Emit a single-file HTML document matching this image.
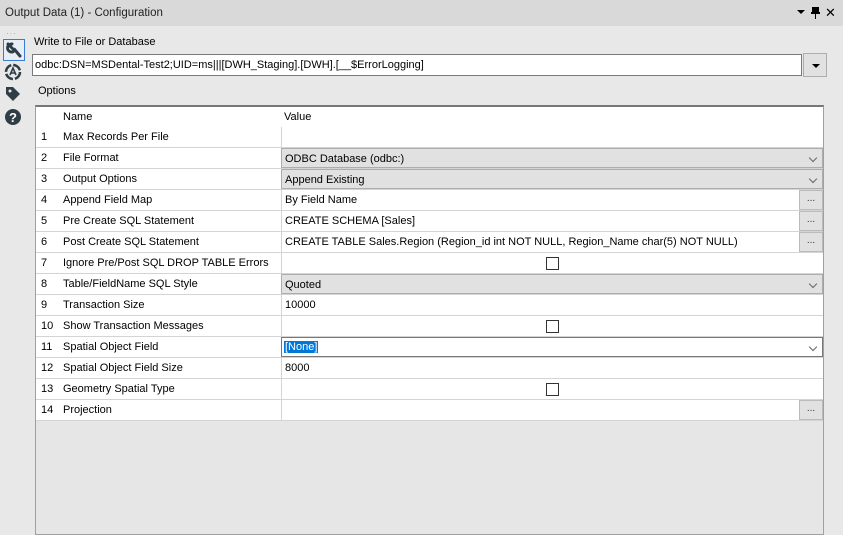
<!DOCTYPE html>
<html><head><meta charset="utf-8"><style>
*{margin:0;padding:0;box-sizing:border-box}
body{width:843px;height:527px;background:#e8e8e8;font-family:"Liberation Sans",sans-serif;font-size:11px;color:#000;position:relative;overflow:hidden}
.a{position:absolute}
.title{left:0;top:0;width:843px;height:26px;background:#d9d9d9;font-size:11.5px;line-height:26px;padding-left:5px;color:#222}
.grid{left:35px;top:105px;width:789px;height:430px;border:1px solid #a0a0a0;border-top:2px solid #777;background:#e6e6e6}
.row{position:absolute;left:36px;width:787px;height:21px;background:#fff;border-bottom:1px solid #d4d4d4}
.row span{position:absolute;top:4px}
.n{left:5px}.nm{left:27px}
.val{position:absolute;left:245px;top:0;width:542px;height:20px;border-left:1px solid #d4d4d4}
.val span{left:3px}
.sel{background:#e1e1e1;border:1px solid #adadad}
.chev{position:absolute;right:6px;top:6px;width:6px;height:6px;border-right:1px solid #666;border-bottom:1px solid #666;transform:rotate(45deg)}
.btn{position:absolute;right:0;top:0px;width:24px;height:20px;background:#e1e1e1;border:1px solid #bbb;font-size:10px;text-align:center;line-height:16px;color:#333}
.cb{position:absolute;left:264px;top:4px;width:13px;height:13px;border:1px solid #333;background:#fff}
</style></head><body>
<div class="a title">Output Data (1) - Configuration</div>
<div class="a" style="left:797px;top:10px;width:0;height:0;border-left:4px solid transparent;border-right:4px solid transparent;border-top:4px solid #000"></div>
<div class="a" style="left:812px;top:7px;width:7px;height:7px;background:#000"></div>
<div class="a" style="left:811px;top:12px;width:9px;height:2px;background:#000"></div>
<div class="a" style="left:815px;top:13px;width:1px;height:6px;background:#000"></div>
<div class="a" style="left:825px;top:5px;font-size:13px">✕</div>
<div class="a" style="left:6px;top:29px;font-size:8px;color:#999;letter-spacing:1px">···</div>
<div class="a" style="left:3px;top:39px;width:22px;height:22px;border:1px solid #3a7bd5;background:#e8eef5"></div>
<svg class="a" style="left:5px;top:41px" width="18" height="18" viewBox="0 0 18 18"><path d="M3 3 L8 8 M7 3 A4 4 0 1 0 10 9 L15 15" stroke="#2f3e46" stroke-width="3" fill="none" stroke-linecap="round"/></svg>
<svg class="a" style="left:4px;top:63px" width="18" height="18" viewBox="0 0 18 18"><circle cx="9" cy="9" r="7" stroke="#2f3e46" stroke-width="2.5" fill="none" stroke-dasharray="9 2"/><path d="M6 12 L9 5 L12 12 M7 10 H11" stroke="#2f3e46" stroke-width="1.6" fill="none"/></svg>
<svg class="a" style="left:4px;top:85px" width="18" height="18" viewBox="0 0 18 18"><path d="M2 2 H9 L16 9 L9 16 L2 9 Z" fill="#2f3e46"/><circle cx="6" cy="6" r="1.5" fill="#e8e8e8"/></svg>
<svg class="a" style="left:4px;top:108px" width="18" height="18" viewBox="0 0 18 18"><circle cx="9" cy="9" r="8" fill="#2f3e46"/><text x="9" y="14" font-size="13" font-weight="bold" fill="#fff" text-anchor="middle" font-family="Liberation Sans">?</text></svg>
<div class="a" style="left:34px;top:36px">Write to File or Database</div>
<div class="a" style="left:32px;top:54px;width:770px;height:22px;background:#fff;border:1px solid #7a7a7a;padding:4px 2px">odbc:DSN=MSDental-Test2;UID=ms|||[DWH_Staging].[DWH].[__$ErrorLogging]</div>
<div class="a" style="left:803px;top:53px;width:24px;height:24px;background:#e1e1e1;border:1px solid #adadad"><div class="a" style="left:8px;top:10px;border-left:4px solid transparent;border-right:4px solid transparent;border-top:4px solid #000"></div></div>
<div class="a" style="left:38px;top:85px">Options</div>
<div class="a grid"></div>
<div class="row" style="top:107px;height:20px;border-bottom:none"><span class="nm" style="top:4px">Name</span><div class="val" style="border-left:none;left:245px"><span style="top:4px">Value</span></div></div>
<div class="row" style="top:127px"><span class="n">1</span><span class="nm">Max Records Per File</span><div class="val"></div></div>
<div class="row" style="top:148px"><span class="n">2</span><span class="nm">File Format</span><div class="val sel"><span>ODBC Database (odbc:)</span><i class="chev"></i></div></div>
<div class="row" style="top:169px"><span class="n">3</span><span class="nm">Output Options</span><div class="val sel"><span>Append Existing</span><i class="chev"></i></div></div>
<div class="row" style="top:190px"><span class="n">4</span><span class="nm">Append Field Map</span><div class="val"><span>By Field Name</span><div class="btn">...</div></div></div>
<div class="row" style="top:211px"><span class="n">5</span><span class="nm">Pre Create SQL Statement</span><div class="val"><span>CREATE SCHEMA [Sales]</span><div class="btn">...</div></div></div>
<div class="row" style="top:232px"><span class="n">6</span><span class="nm">Post Create SQL Statement</span><div class="val"><span>CREATE TABLE Sales.Region (Region_id int NOT NULL, Region_Name char(5) NOT NULL)</span><div class="btn">...</div></div></div>
<div class="row" style="top:253px"><span class="n">7</span><span class="nm">Ignore Pre/Post SQL DROP TABLE Errors</span><div class="val"><i class="cb"></i></div></div>
<div class="row" style="top:274px"><span class="n">8</span><span class="nm">Table/FieldName SQL Style</span><div class="val sel"><span>Quoted</span><i class="chev"></i></div></div>
<div class="row" style="top:295px"><span class="n">9</span><span class="nm">Transaction Size</span><div class="val"><span>10000</span></div></div>
<div class="row" style="top:316px"><span class="n">10</span><span class="nm">Show Transaction Messages</span><div class="val"><i class="cb"></i></div></div>
<div class="row" style="top:337px"><span class="n">11</span><span class="nm">Spatial Object Field</span><div class="val" style="border:1px solid #777"><span style="background:#0078d7;color:#fff;left:2px;top:3px;padding:0 1px">[None]</span><i class="chev"></i></div></div>
<div class="row" style="top:358px"><span class="n">12</span><span class="nm">Spatial Object Field Size</span><div class="val"><span>8000</span></div></div>
<div class="row" style="top:379px"><span class="n">13</span><span class="nm">Geometry Spatial Type</span><div class="val"><i class="cb"></i></div></div>
<div class="row" style="top:400px"><span class="n">14</span><span class="nm">Projection</span><div class="val"><div class="btn">...</div></div></div>
</body></html>
